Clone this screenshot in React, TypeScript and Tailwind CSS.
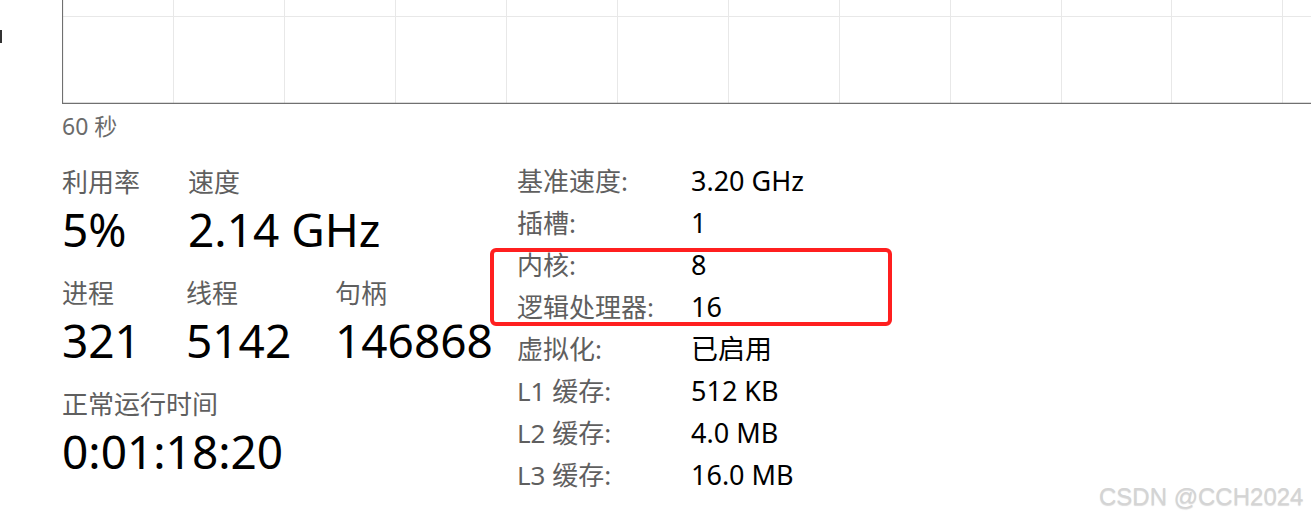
import React from "react";

const gridXs = [111, 222, 333, 444, 555, 666, 777, 888, 999, 1109, 1220];

function Chart() {
  return (
    <svg width="1249" height="104" className="block">
      <line x1="0" y1="16.5" x2="1249" y2="16.5" stroke="#e8e8e8" strokeWidth="1" />
      {gridXs.map((x) => (
        <line key={x} x1={x + 0.5} y1="0" x2={x + 0.5} y2="103" stroke="#e8e8e8" strokeWidth="1" />
      ))}
      <line x1="0.5" y1="0" x2="0.5" y2="104" stroke="#707070" strokeWidth="1.2" />
      <line x1="0" y1="103.5" x2="1249" y2="103.5" stroke="#707070" strokeWidth="1.4" />
    </svg>
  );
}

function Stat({ label, value, width }: { label: string; value: string; width?: string }) {
  return (
    <div className={`flex flex-col ${width ?? ""}`}>
      <div className="text-[26px] leading-[34px] text-[#5f5f5f] whitespace-nowrap">{label}</div>
      <div className="mt-[5px] text-[46px] leading-[50px] text-black whitespace-nowrap">{value}</div>
    </div>
  );
}

const rows: [string, string][] = [
  ["基准速度:", "3.20 GHz"],
  ["插槽:", "1"],
  ["内核:", "8"],
  ["逻辑处理器:", "16"],
  ["虚拟化:", "已启用"],
  ["L1 缓存:", "512 KB"],
  ["L2 缓存:", "4.0 MB"],
  ["L3 缓存:", "16.0 MB"],
];

export default function App() {
  return (
    <div className="relative w-[1311px] h-[519px] overflow-hidden bg-white font-['Noto_Sans','Noto_Sans_CJK_SC',sans-serif]">
      <div className="flex">
        <div className="w-[62px] pt-[30px]">
          <div className="w-[2px] h-[13px] bg-[#333]" />
        </div>
        <Chart />
      </div>
      <div className="pl-[62px] mt-[6px] text-[23px] leading-[32px] text-[#6b6b6b]">60 秒</div>
      <div className="flex mt-[18px]">
        <div className="w-[517px] pl-[62px] pt-[5px] flex flex-col gap-[22px]">
          <div className="flex">
            <Stat label="利用率" value="5%" width="w-[126px]" />
            <Stat label="速度" value="2.14 GHz" />
          </div>
          <div className="flex">
            <Stat label="进程" value="321" width="w-[124px]" />
            <Stat label="线程" value="5142" width="w-[149px]" />
            <Stat label="句柄" value="146868" />
          </div>
          <Stat label="正常运行时间" value="0:01:18:20" />
        </div>
        <div className="flex flex-col">
          {rows.map(([k, v]) => (
            <div key={k} className="flex h-[42px] items-center leading-[34px]">
              <div className="w-[174px] text-[26px] text-[#5f5f5f] whitespace-nowrap">{k}</div>
              <div className="text-[27px] text-black whitespace-nowrap">{v}</div>
            </div>
          ))}
        </div>
      </div>
      <div className="absolute left-[490px] top-[248px] w-[402px] h-[78px] border-[4px] border-[#ff1f1f] rounded-[6px]" />
      <div className="absolute left-[1099px] top-[482px] text-[24px] leading-[30px] text-[#d4d4d4] font-['Liberation_Sans',sans-serif] [text-shadow:0_1px_1px_rgba(0,0,0,0.15)]">
        CSDN @CCH2024
      </div>
    </div>
  );
}
